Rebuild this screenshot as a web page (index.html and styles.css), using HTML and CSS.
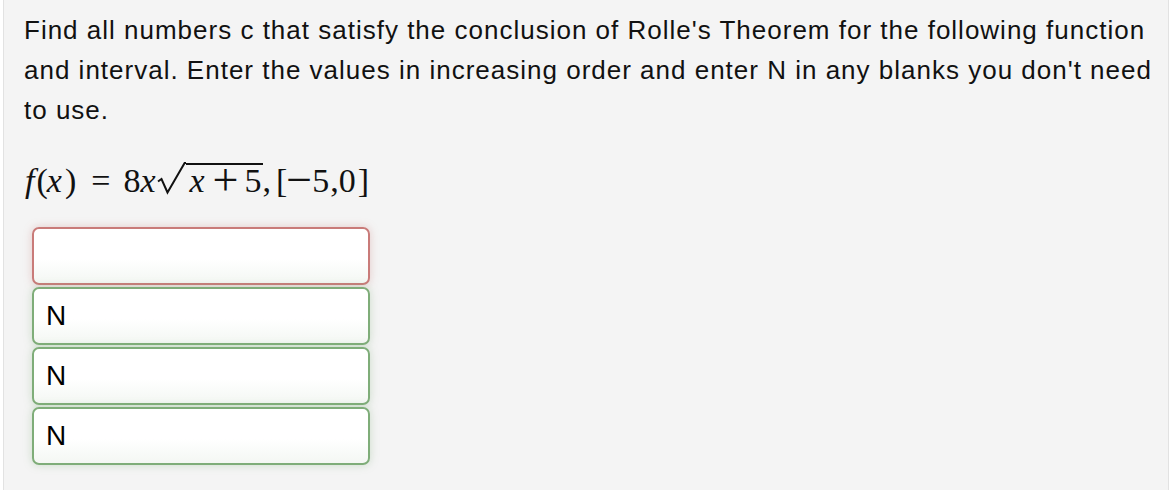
FILE: index.html
```html
<!DOCTYPE html>
<html>
<head>
<meta charset="utf-8">
<link rel="stylesheet" href="styles.css">
</head>
<body>
<div class="panel">
  <p class="prompt">Find all numbers c that satisfy the conclusion of Rolle's Theorem for the following function and interval. Enter the values in increasing order and enter N in any blanks you don't need to use.</p>
  <div class="math"><span class="mi f">f</span><span class="mo lp">(</span><span class="mi x1">x</span><span class="mo rp">)</span><span class="rel">=</span><span class="mn eight">8</span><span class="mi">x</span><span class="sqrt"><svg class="radic" width="29" height="33" viewBox="0 0 29 33"><path d="M1 19.5 L4.5 17 L10.5 30.5 L27.6 1 L29 1" fill="none" stroke="#111" stroke-width="2" stroke-linejoin="miter"/></svg><span class="rad"><span class="mi">x</span><span class="big plus">+</span><span class="mn five">5</span></span></span><span class="mo">,</span><span class="mo lb">[</span><span class="big minus">−</span><span class="mn n5">5</span><span class="mo c2">,</span><span class="mn">0</span><span class="mo rb">]</span></div>
  <div class="answers">
    <div class="field bad"></div>
    <div class="field good">N</div>
    <div class="field good">N</div>
    <div class="field good">N</div>
  </div>
</div>
</body>
</html>
```
FILE: styles.css
```css
html, body {
  margin: 0;
  padding: 0;
  background: #ffffff;
}
.panel {
  margin-left: 3px;
  width: 1166px;
  height: 490px;
  box-sizing: border-box;
  background: #f4f4f4;
  border-left: 1px solid #e2e2e2;
  border-right: 1px solid #e2e2e2;
  padding: 10px 10px 0 20px;
  font-family: "Liberation Sans", Arial, sans-serif;
  color: #111;
}
.prompt {
  margin: 0;
  font-size: 26px;
  line-height: 40px;
  letter-spacing: 1px;
}
.math {
  margin-top: 26px;
  font-family: "Liberation Serif", "DejaVu Serif", serif;
  font-size: 34px;
  height: 50px;
  line-height: 50px;
  white-space: nowrap;
  color: #111;
}
.mi { font-style: italic; }
.mo, .mn { font-style: normal; }
.f { margin-left: 1px; margin-right: 2px; }
.x1 { margin-left: -1px; }
.rp { margin-left: 3px; }
.rel { margin-left: 15px; margin-right: 13px; }
.radic {
  vertical-align: -3px;
  margin-left: 2px;
}
.rad {
  display: inline-block;
  line-height: 28px;
  padding-top: 2px;
  padding-left: 3px;
  padding-right: 1px;
  border-top: 2px solid #111;
}
.big {
  font-family: "Liberation Serif", serif;
  font-style: normal;
  font-size: 46px;
  line-height: 0;
  vertical-align: -3px;
}
.plus { margin-left: 8px; }
.five { margin-left: 6px; }
.lb { margin-left: 5px; }
.minus { margin-left: -1px; }
.c2 { margin-left: 1px; }
.rb { margin-left: 2px; }
.answers {
  margin-top: 21px;
  margin-left: 8px;
  display: flex;
  flex-direction: column;
  gap: 2px;
}
.field {
  width: 338px;
  height: 58px;
  box-sizing: border-box;
  border-radius: 7px;
  background: linear-gradient(#ffffff 55%, #f4f7f3);
  font-size: 28px;
  line-height: 54px;
  padding-left: 12px;
  color: #000;
}
.bad {
  border: 2px solid #c97b79;
  box-shadow: 0 0 9px rgba(201, 123, 121, 0.35);
}
.good {
  border: 2px solid #7fad79;
  box-shadow: 0 0 9px rgba(127, 173, 121, 0.35);
}
```
